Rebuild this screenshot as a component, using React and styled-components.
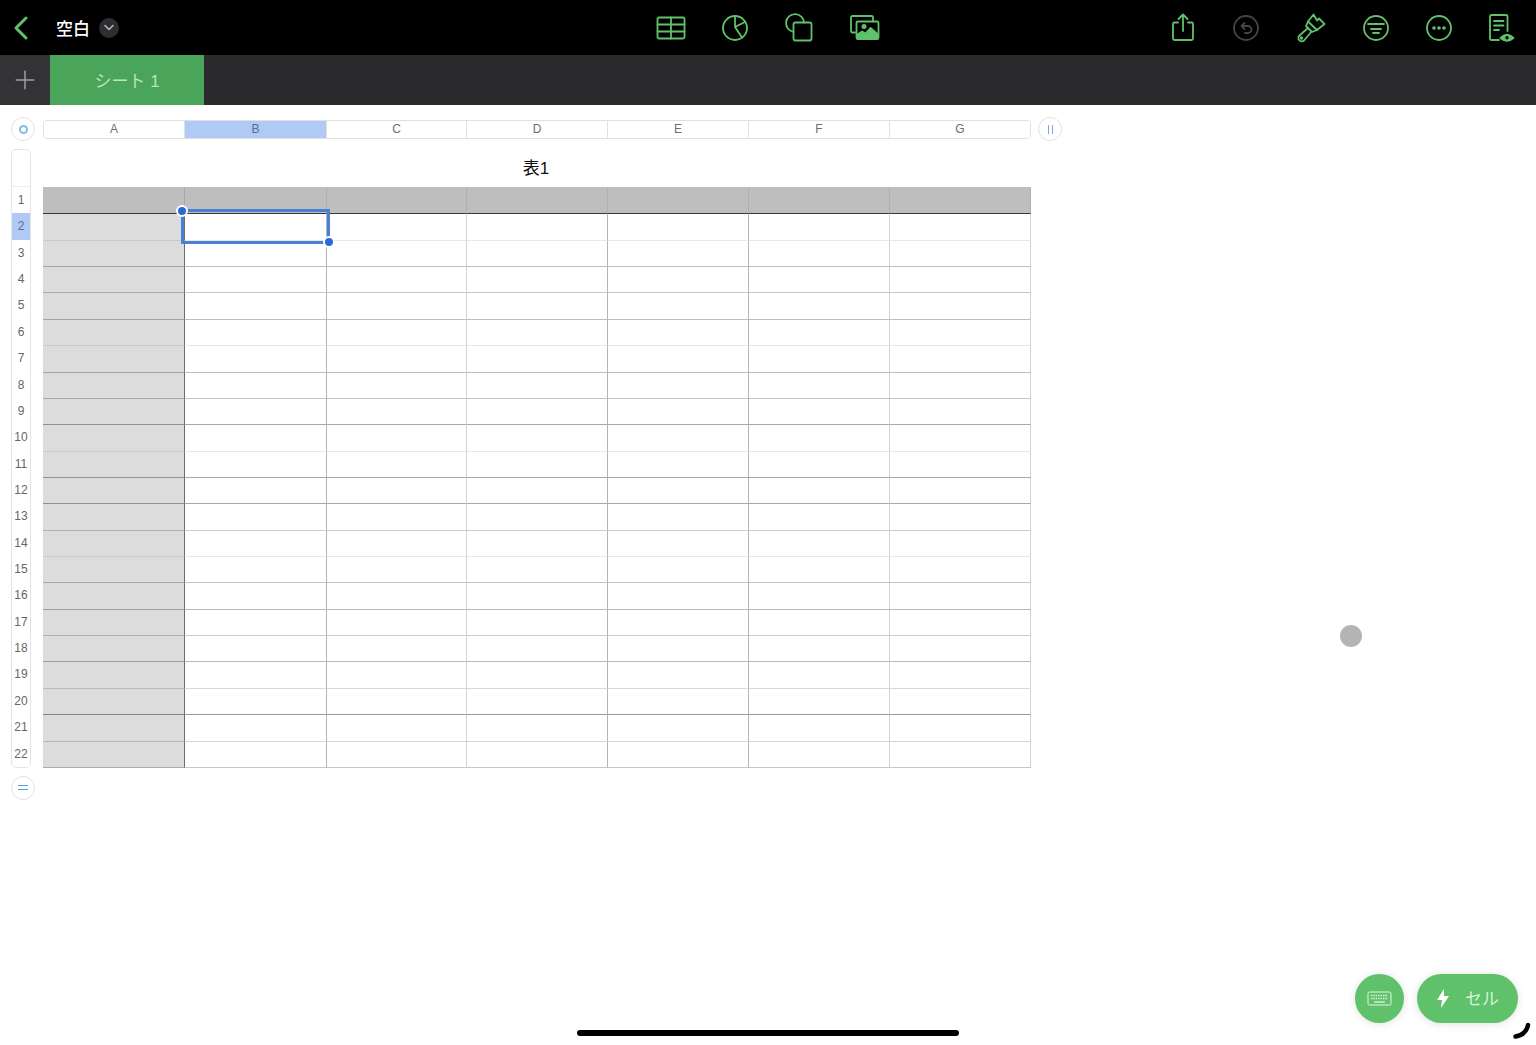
import styled, { createGlobalStyle } from "styled-components";
import { Plus } from "lucide-react";

const GlobalStyle = createGlobalStyle`
  html, body {
    margin: 0;
    padding: 0;
    background: #fff;
  }
  body {
    font-family: "Liberation Sans", "Noto Sans CJK JP", sans-serif;
  }
`;

const GREEN = "#5fc26a";
const COLUMNS = ["A", "B", "C", "D", "E", "F", "G"];
const COLUMN_WIDTHS = [142, 142, 140, 141, 141, 141, 141];
const STRONG_COLUMNS = [1, 3, 4];
// line darkness under each row, the scaled-down screenshot makes them uneven
const ROW_LINES = [
  0.71, 0.09, 0.26, 0.22, 0.26, 0.09, 0.26, 0.23, 0.34, 0.09, 0.34, 0.34, 0.2, 0.09, 0.23, 0.28,
  0.2, 0.28, 0.15, 0.4, 0.17, 0.22,
];
const ROWS = Array.from({ length: 22 }, (_, i) => i + 1);

const Icon = ({ children, dx = 0 }) => (
  <svg
    width="34"
    height="34"
    viewBox="0 0 34 34"
    fill="none"
    stroke={GREEN}
    strokeWidth="1.8"
    strokeLinecap="round"
    strokeLinejoin="round"
  >
    <g transform={`translate(${dx} 0)`}>{children}</g>
  </svg>
);

const App = () => {
  return (
    <Page>
      <GlobalStyle />
      <TopBar>
        <TitleGroup>
          <svg width="16" height="26" viewBox="0 0 16 26" fill="none" stroke={GREEN} strokeWidth="3" strokeLinecap="round" strokeLinejoin="round">
            <path d="M13 3 L3 13 L13 23" />
          </svg>
          <DocTitle>空白</DocTitle>
          <TitleChevron>
            <svg width="10" height="7" viewBox="0 0 10 7" fill="none" stroke="#b5b5b8" strokeWidth="1.6" strokeLinecap="round" strokeLinejoin="round">
              <path d="M1 1.5 L5 5.5 L9 1.5" />
            </svg>
          </TitleChevron>
        </TitleGroup>

        <CenterTools>
          <Icon>
            <rect x="3.5" y="6.5" width="27" height="21" rx="1.5" />
            <path d="M3.5 13.5 H30.5 M3.5 20.5 H30.5 M17 6.5 V27.5" />
          </Icon>
          <Icon>
            <circle cx="17" cy="17" r="12" />
            <path d="M17 5 V16 L27 11 M17 16 L24 26.5" />
          </Icon>
          <Icon>
            <path d="M11.5 20.9 A9 9 0 1 1 22 11.5" />
            <rect x="11.5" y="11.5" width="18" height="18" rx="2" />
          </Icon>
          <Icon>
            <path d="M9 21.5 H6.5 A1.5 1.5 0 0 1 5 20 V6.5 A1.5 1.5 0 0 1 6.5 5 H25.5 A1.5 1.5 0 0 1 27 6.5 V10.5" />
            <rect x="10.5" y="10.5" width="22" height="17.5" rx="1.5" />
            <circle cx="18" cy="15.6" r="1.6" fill={GREEN} />
            <path d="M11 27.5 V24 L16 20.5 L19.5 22.5 L24.5 17 L32 23.5 V27.5 Z" fill={GREEN} />
          </Icon>
        </CenterTools>

        <RightTools>
          <Icon>
            <path d="M12 11.5 H8.5 A1.5 1.5 0 0 0 7 13 V27.5 A1.5 1.5 0 0 0 8.5 29 H25.5 A1.5 1.5 0 0 0 27 27.5 V13 A1.5 1.5 0 0 0 25.5 11.5 H22" />
            <path d="M17 20 V3.5 M12.5 8 L17 3.5 L21.5 8" />
          </Icon>
          <Icon>
            <g stroke="#44444a">
              <circle cx="17" cy="17" r="12" />
              <path d="M13 15 H19 A3.2 3.2 0 0 1 19 22 H16 M15.5 12 L12.5 15 L15.5 18" />
            </g>
          </Icon>
          <Icon>
            <path d="M20.5 3.5 L24 9.5 L26 7.5 L31.5 13 L24 19 L15 10.5 Z" />
            <path d="M15 10.5 L13 15 L19 21 L24 19" />
            <path d="M15 17 L6.5 24.5 A3 3 0 0 0 11 29.5 L18.5 20.5" />
            <circle cx="8.5" cy="27" r="0.8" />
          </Icon>
          <Icon dx={3}>
            <circle cx="17" cy="17" r="12" />
            <path d="M9 13 H25 M12 18 H22 M14 22 H20" />
          </Icon>
          <Icon dx={2}>
            <circle cx="17" cy="17" r="12" />
            <circle cx="12" cy="17" r="0.9" fill={GREEN} />
            <circle cx="17" cy="17" r="0.9" fill={GREEN} />
            <circle cx="22" cy="17" r="0.9" fill={GREEN} />
          </Icon>
          <Icon dx={-1}>
            <path d="M17 29 H9.5 A1.5 1.5 0 0 1 8 27.5 V5.5 A1.5 1.5 0 0 1 9.5 4 H24 A1.5 1.5 0 0 1 25.5 5.5 V20" />
            <path d="M12 10 H21.5 M12 14.5 H21.5 M12 19 H17" />
            <path d="M18.5 27 Q25 20.5 31.5 27 Q25 32.5 18.5 27 Z" fill={GREEN} />
            <circle cx="25" cy="26.8" r="1.7" fill="#000" stroke="none" />
          </Icon>
        </RightTools>
      </TopBar>

      <TabBar>
        <AddSheet>
          <Plus size={30} color="#a0a0a2" strokeWidth={1.2} />
        </AddSheet>
        <SheetTab>シート 1</SheetTab>
      </TabBar>

      <Sheet>
        <ColumnRow>
          <RoundHandle $mt={-1}>
            <SelectAllDot />
          </RoundHandle>
          <ColumnHeader>
            {COLUMNS.map((col, i) => (
              <ColumnLabel key={col} $selected={col === "B"} $width={COLUMN_WIDTHS[i]}>
                {col}
              </ColumnLabel>
            ))}
          </ColumnHeader>
          <RoundHandle $ml={-1} $mt={-1}>
            <PauseBars />
          </RoundHandle>
        </ColumnRow>

        <TableArea>
          <RowHeader>
            <RowHeaderCap />
            {ROWS.map((row) => (
              <RowLabel key={row} $selected={row === 2}>
                {row}
              </RowLabel>
            ))}
          </RowHeader>

          <TableColumn>
            <TableTitle>表1</TableTitle>
            <Grid>
              {ROWS.map((row) => (
                <GridRow key={row} $tall={row === 1}>
                  {COLUMNS.map((col, i) => (
                    <Cell
                      key={col}
                      $header={row === 1}
                      $side={i === 0 && row > 1}
                      $width={COLUMN_WIDTHS[i]}
                      $first={i === 0}
                      $strong={STRONG_COLUMNS.includes(i)}
                      $line={ROW_LINES[row - 1]}
                    />
                  ))}
                </GridRow>
              ))}
              <Selection>
                <TopHandle />
                <BottomHandle />
              </Selection>
            </Grid>
          </TableColumn>
        </TableArea>

        <AddRowHandle>
          <RoundHandle>
            <EqualBars />
          </RoundHandle>
        </AddRowHandle>
      </Sheet>

      <ScrollDot />

      <FloatingActions>
        <KeyboardButton>
          <svg width="25" height="15" viewBox="0 0 25 15" fill="none" stroke="#e4f6e5" strokeWidth="1">
            <rect x="1" y="1" width="23" height="13" rx="1.5" />
            <path d="M4 4.5 H21 M4 7.5 H21" strokeDasharray="1.4 1" strokeWidth="1.3" />
            <path d="M7 11 H18" strokeWidth="1.3" />
          </svg>
        </KeyboardButton>
        <CellButton>
          <svg width="12" height="19" viewBox="0 0 12 19" fill="#fff">
            <path d="M7 0 L0 11 H5 L4 19 L12 7 H7 Z" />
          </svg>
          <CellLabel>セル</CellLabel>
        </CellButton>
      </FloatingActions>

      <CornerMark>
        <svg width="20" height="20" viewBox="0 0 20 20" fill="none" stroke="#000" strokeWidth="4.5" strokeLinecap="round">
          <path d="M17 4 C16 10 12 14 4.5 15.5" />
        </svg>
      </CornerMark>

      <HomeIndicator />
    </Page>
  );
};

const Page = styled.div`
  position: relative;
  width: 1536px;
  height: 1045px;
  overflow: hidden;
  background: #fff;
`;

const TopBar = styled.header`
  position: relative;
  height: 55px;
  background: #000;
  display: flex;
  align-items: center;
  justify-content: space-between;
  box-sizing: border-box;
  padding: 0 19px 0 13px;
`;

const TitleGroup = styled.div`
  display: flex;
  align-items: center;
`;

const DocTitle = styled.span`
  margin-left: 27px;
  color: #fff;
  font-size: 17px;
  font-weight: 500;
`;

const TitleChevron = styled.span`
  width: 20px;
  height: 20px;
  margin-left: 9px;
  border-radius: 50%;
  background: #2e2e32;
  display: flex;
  align-items: center;
  justify-content: center;
`;

const CenterTools = styled.nav`
  position: absolute;
  left: 654px;
  top: 11px;
  display: flex;
  gap: 30px;
`;

const RightTools = styled.nav`
  display: flex;
  gap: 29.5px;
`;

const TabBar = styled.div`
  height: 50px;
  box-sizing: border-box;
  background: #2a2a2c;
  display: flex;
`;

const AddSheet = styled.button`
  width: 50px;
  padding: 0;
  border: 0;
  background: #333335;
  display: flex;
  align-items: center;
  justify-content: center;
`;

const SheetTab = styled.div`
  width: 154px;
  box-sizing: border-box;
  padding-bottom: 2px;
  background: #4aa45a;
  color: #b9e6bd;
  font-size: 17px;
  display: flex;
  align-items: center;
  justify-content: center;
`;

const Sheet = styled.main`
  padding: 15px 0 0 11px;
`;

const ColumnRow = styled.div`
  display: flex;
  align-items: center;
  gap: 8px;
  width: 1052px;
  height: 19px;
`;

const RoundHandle = styled.div`
  width: 24px;
  height: 24px;
  flex: none;
  margin-left: ${(p) => p.$ml || 0}px;
  margin-top: ${(p) => p.$mt || 0}px;
  box-sizing: border-box;
  border: 1px solid #e2e2e2;
  border-radius: 50%;
  background: #fff;
  display: flex;
  align-items: center;
  justify-content: center;
`;

const SelectAllDot = styled.span`
  width: 9px;
  height: 9px;
  box-sizing: border-box;
  border: 2px solid #79bfe6;
  border-radius: 50%;
`;

const PauseBars = styled.span`
  width: 5px;
  height: 9px;
  box-sizing: border-box;
  border-left: 1px solid #7fa8e0;
  border-right: 1px solid #7fa8e0;
`;

const EqualBars = styled.span`
  width: 10px;
  height: 5px;
  box-sizing: border-box;
  border-top: 1px solid #5f9ae8;
  border-bottom: 1px solid #5f9ae8;
`;

const ColumnHeader = styled.div`
  display: flex;
  flex: none;
  box-sizing: border-box;
  width: 988px;
  height: 19px;
  border: 1px solid #e0e0e0;
  border-radius: 4px;
  overflow: hidden;
`;

const ColumnLabel = styled.div`
  width: ${(p) => p.$width}px;
  box-sizing: border-box;
  border-right: 1px solid #e0e0e0;
  background: ${(p) => (p.$selected ? "#b0c9f5" : "#fff")};
  color: ${(p) => (p.$selected ? "#5a6f90" : "#6e6e6e")};
  font-size: 12px;
  line-height: 17px;
  text-align: center;

  &:first-child,
  &:last-child {
    width: ${(p) => p.$width - 1}px;
  }

  &:last-child {
    border-right: 0;
  }
`;

const TableArea = styled.div`
  display: flex;
  margin-top: 10px;
`;

const RowHeader = styled.div`
  width: 20px;
  box-sizing: border-box;
  border: 1px solid #e4e4e4;
  border-radius: 5px;
  overflow: hidden;
  display: flex;
  flex-direction: column;
`;

const RowHeaderCap = styled.div`
  height: 37px;
  border-bottom: 1px solid #eeeeee;
  box-sizing: border-box;
`;

const RowLabel = styled.div`
  height: 26.36px;
  background: ${(p) => (p.$selected ? "#b0c9f5" : "#fff")};
  color: ${(p) => (p.$selected ? "#5a6f90" : "#666")};
  font-size: 12px;
  line-height: 26px;
  text-align: center;
`;

const TableColumn = styled.div`
  margin-left: 12px;
  display: flex;
  flex-direction: column;
`;

const TableTitle = styled.div`
  height: 38px;
  padding-right: 2px;
  color: #111;
  font-size: 17px;
  line-height: 40px;
  text-align: center;
`;

const Grid = styled.div`
  position: relative;
  width: 988px;
  display: flex;
  flex-direction: column;
`;

const GridRow = styled.div`
  display: flex;
  height: ${(p) => (p.$tall ? 27.36 : 26.36)}px;
`;

const cellBackground = (p) => {
  if (p.$header) return "#bebebe";
  if (p.$side) return "#dcdcdc";
  return "#fff";
};

const cellRightLine = (p) => {
  if (p.$first) return p.$header ? "#a8a8a8" : "#6c6c6c";
  if (p.$header) return "#b0b0b0";
  return p.$strong ? "#b4b4b4" : "#d2d2d2";
};

const Cell = styled.div`
  width: ${(p) => p.$width}px;
  box-sizing: border-box;
  background: ${cellBackground};
  border-right: 1px solid ${cellRightLine};
  border-bottom: 1px solid rgba(0, 0, 0, ${(p) => p.$line});
`;

const Selection = styled.div`
  position: absolute;
  left: 138px;
  top: 22px;
  width: 143px;
  height: 29px;
  border: 3px solid #4a7fd6;
  border-radius: 1px;
`;

const Handle = styled.span`
  position: absolute;
  width: 8px;
  height: 8px;
  box-sizing: content-box;
  border: 2px solid #fff;
  border-radius: 50%;
  background: #2a6ad6;
`;

const TopHandle = styled(Handle)`
  left: -8px;
  top: -7px;
`;

const BottomHandle = styled(Handle)`
  right: -8px;
  bottom: -7px;
`;

const AddRowHandle = styled.div`
  margin-top: 8px;
`;

const ScrollDot = styled.div`
  position: absolute;
  left: 1340px;
  top: 625px;
  width: 22px;
  height: 22px;
  border-radius: 50%;
  background: #b4b4b4;
`;

const FloatingActions = styled.div`
  position: absolute;
  right: 18px;
  top: 974px;
  display: flex;
  gap: 13px;
`;

const KeyboardButton = styled.button`
  width: 49px;
  height: 49px;
  padding: 0;
  border: 0;
  border-radius: 50%;
  background: ${GREEN};
  box-shadow: 0 1px 8px rgba(0, 0, 0, 0.12);
  display: flex;
  align-items: center;
  justify-content: center;
`;

const CellButton = styled.button`
  width: 101px;
  height: 49px;
  padding: 0 0 0 20px;
  border: 0;
  border-radius: 25px;
  background: ${GREEN};
  box-shadow: 0 1px 8px rgba(0, 0, 0, 0.12);
  color: #d8f3da;
  font-family: inherit;
  font-size: 17px;
  display: flex;
  align-items: center;
  gap: 16px;
`;

const CellLabel = styled.span`
  padding-bottom: 2px;
`;

const CornerMark = styled.div`
  position: absolute;
  left: 1511px;
  top: 1021px;
  line-height: 0;
`;

const HomeIndicator = styled.div`
  position: absolute;
  left: 577px;
  top: 1030px;
  width: 382px;
  height: 6px;
  border-radius: 3px;
  background: #000;
`;

export default App;
